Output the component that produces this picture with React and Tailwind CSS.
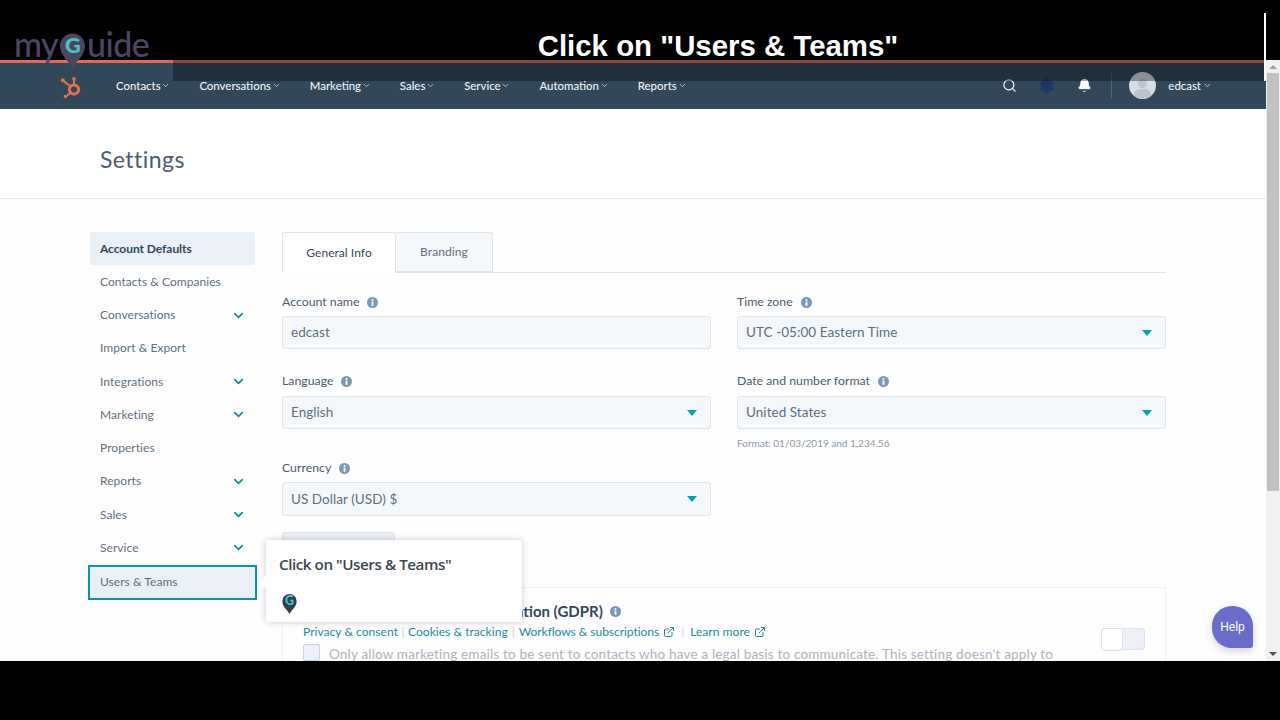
import { ChevronDown, Search, Settings, Bell, ExternalLink } from 'lucide-react';

const NAV = ['Contacts', 'Conversations', 'Marketing', 'Sales', 'Service', 'Automation', 'Reports'];

const SIDE = [
  ['Account Defaults', false],
  ['Contacts & Companies', false],
  ['Conversations', true],
  ['Import & Export', false],
  ['Integrations', true],
  ['Marketing', true],
  ['Properties', false],
  ['Reports', true],
  ['Sales', true],
  ['Service', true],
];

function Info({ className = '' }) {
  return (
    <svg viewBox="0 0 12 12" className={`w-[11px] h-[11px] ${className}`}>
      <circle cx="6" cy="6" r="6" fill="#7c98b6" />
      <circle cx="6" cy="3.2" r="1.1" fill="#fff" />
      <rect x="5" y="5" width="2" height="4.6" fill="#fff" />
    </svg>
  );
}

function Caret() {
  return <span className="w-0 h-0 border-x-[5.5px] border-x-transparent border-t-[6px] border-t-[#0a9fb5]" />;
}

function Field({ label, value, select, labelGap = 'mb-[6px]', box = 'h-[33px]' }) {
  return (
    <div>
      <div className={`flex items-center gap-[8px] h-[16px] text-[12.3px] text-[#4a5c6e] ${labelGap}`}>
        {label}
        <Info />
      </div>
      <div className={`${box} flex items-center justify-between pl-[8px] pr-[13px] bg-[#f5f8fa] border border-[#dfe3eb] rounded-[3px] text-[13.5px] tracking-[0.05px] text-[#5d6f80]`}>
        {value}
        {select && <Caret />}
      </div>
    </div>
  );
}

function Sprocket() {
  return (
    <svg viewBox="0 0 22 22" className="w-[22px] h-[22px]">
      <circle cx="14" cy="13.5" r="4.6" fill="none" stroke="#e8704f" strokeWidth="3" />
      <path d="M14 8V3.5M10.5 10.5L3.5 5M10.8 16.8L6 20.5" stroke="#e8704f" strokeWidth="2" fill="none" />
      <circle cx="14" cy="2.8" r="1.9" fill="#e8704f" />
      <circle cx="2.8" cy="4.2" r="2" fill="#e8704f" />
      <circle cx="5.4" cy="20.4" r="1.7" fill="#e8704f" />
    </svg>
  );
}

function Pin({ className = '', large }) {
  return (
    <svg viewBox="0 0 30 42" className={className}>
      <path d="M15 42C12 34 0 27 0 15a15 15 0 0 1 30 0c0 12-12 19-15 27z" fill={large ? '#4b4663' : '#2c3e50'} />
      <text x="15" y="23.5" textAnchor="middle" fontSize="26" fontWeight="900" fill="#45c8c4" fontFamily="Lato, sans-serif">G</text>
    </svg>
  );
}

export default function App() {
  return (
    <div className="relative w-[1280px] h-[720px] bg-black overflow-hidden flex flex-col font-['Lato',sans-serif]">
      {/* ── Video caption bar ── */}
      <div className="h-[60px] shrink-0 flex items-center justify-center pl-[156px] pt-[32px] box-border">
        <span className="text-[29.4px] leading-none font-bold text-white font-['Liberation_Sans',sans-serif] whitespace-nowrap">Click on "Users &amp; Teams"</span>
      </div>

      <div className="h-[601px] shrink-0 flex">
        <div className="w-[1266px] shrink-0 flex flex-col bg-white overflow-hidden">
          {/* ── Nav ── */}
          <div className="h-[49px] shrink-0 bg-[#33475b] border-t-[3px] border-[#df6b50] flex items-center pb-[1px] text-white">
            <div className="w-[116px] shrink-0 pl-[60px] pt-[2px]"><Sprocket /></div>
            <div className="flex items-center gap-[29px] text-[11.4px] font-medium text-[#eef2f6]">
              {NAV.map(n => (
                <span key={n} className="flex items-center gap-[0.8px]">
                  {n}
                  <ChevronDown className="w-[9px] h-[9px]" strokeWidth={1.8} />
                </span>
              ))}
            </div>
            <div className="ml-auto flex items-center pr-[54px]">
              <Search className="w-[15px] h-[15px] text-white" strokeWidth={1.8} />
              <Settings className="w-[16px] h-[16px] ml-[22px] text-[#1c3a63]" fill="#1c3a63" strokeWidth={2.4} />
              <Bell className="w-[15px] h-[15px] ml-[22px] text-white" fill="#fff" strokeWidth={1.5} />
              <div className="w-px h-[25px] bg-[#51657a] ml-[19px]" />
              <div className="relative w-[27px] h-[27px] ml-[17px] rounded-full bg-[#d6dde6] overflow-hidden">
                <div className="absolute left-[9px] top-[7px] w-[9px] h-[9px] rounded-full bg-[#bcc4ce]" />
                <div className="absolute left-[5px] top-[17px] w-[17px] h-[12px] rounded-full bg-[#bcc4ce]" />
              </div>
              <span className="ml-[12px] text-[11.4px] font-medium text-[#eef2f6]">edcast</span>
              <ChevronDown className="w-[9px] h-[9px] ml-[2px]" strokeWidth={1.8} />
            </div>
          </div>

          {/* ── Page header ── */}
          <div className="h-[90px] shrink-0 border-b border-[#e3e5e8] flex items-center pl-[100px] pt-[12px]">
            <h1 className="text-[23px] font-normal tracking-[0.45px] text-[#4a5c6e]">Settings</h1>
          </div>

          {/* ── Body ── */}
          <div className="flex-1 flex pl-[90px] pt-[33px] bg-[#fefefe]">
            <div className="w-[165px] shrink-0">
              {SIDE.map(([name, more], i) => (
                <div
                  key={name}
                  className={`h-[33.25px] flex items-center justify-between pl-[10px] pr-[9px] text-[12px] ${i === 0 ? 'bg-[#eaf0f6] rounded-[2px] font-bold text-[#33475b] tracking-[-0.05px]' : 'text-[#5d6f80] tracking-[0.05px]'}`}
                >
                  {name}
                  {more && <ChevronDown className="w-[15px] h-[15px] text-[#0a8aa3]" strokeWidth={2.6} />}
                </div>
              ))}
              <div className="h-[35px] -mx-[2px] flex items-center pl-[10px] bg-[#eaf0f6] border-2 border-[#0a93ae] text-[12px] tracking-[0.05px] text-[#5d6f80]">
                Users &amp; Teams
              </div>
            </div>

            <div className="w-[884px] ml-[27px] shrink-0">
              {/* Tabs */}
              <div className="flex h-[41px] border-b border-[#dfe3eb]">
                <div className="w-[114px] h-[41px] flex items-center justify-center border border-b-0 border-[#dfe3eb] rounded-t-[3px] bg-white text-[12px] tracking-[0.05px] text-[#33475b]">General Info</div>
                <div className="w-[97px] h-[40px] flex items-center justify-center border border-l-0 border-[#dfe3eb] rounded-tr-[3px] bg-[#f5f8fa] text-[12px] tracking-[0.1px] text-[#5d6f80]">Branding</div>
              </div>

              {/* Form */}
              <div className="grid grid-cols-[429px_429px] gap-x-[26px] mt-[21px]">
                <Field label="Account name" value="edcast" />
                <Field label="Time zone" value="UTC -05:00 Eastern Time" select />
                <div className="mt-[24px]"><Field label="Language" value="English" select labelGap="mb-[7px]" /></div>
                <div className="mt-[24px]">
                  <Field label="Date and number format" value="United States" select labelGap="mb-[7px]" />
                  <p className="mt-[7px] text-[10px] text-[#8d9bab]">Format: 01/03/2019 and 1,234.56</p>
                </div>
                <div className="mt-[9px]"><Field label="Currency" value="US Dollar (USD) $" select box="h-[34px]" /></div>
              </div>

              <div className="w-[113px] h-[30px] mt-[16px] bg-[#eaf0f6] border border-[#dfe3eb] rounded-[3px]" />

              {/* GDPR card */}
              <div className="relative mt-[25px] h-[200px] border border-[#eef1f5] pl-[20px] pt-[14px]">
                <div className="flex items-center gap-[7px] ml-[10px] text-[15px] font-bold text-[#33475b] h-[18px] whitespace-nowrap">
                  General Data Protection Regulation (GDPR)
                  <Info />
                </div>
                <div className="flex items-center mt-[3px] text-[12.1px] text-[#1f8a9e] h-[18px] whitespace-nowrap">
                  Privacy &amp; consent
                  <span className="mx-[3.5px] text-[#cbd6e2]">|</span>
                  Cookies &amp; tracking
                  <span className="mx-[4px] text-[#cbd6e2]">|</span>
                  <span className="tracking-[-0.08px]">Workflows &amp; subscriptions</span>
                  <ExternalLink className="w-[12px] h-[12px] ml-[4px]" />
                  <span className="mx-[6px] text-[#cbd6e2]">|</span>
                  Learn more
                  <ExternalLink className="w-[12px] h-[12px] ml-[4px]" />
                </div>
                <div className="flex items-start mt-[3px]">
                  <span className="w-[17px] h-[17px] shrink-0 bg-[#eaf0f6] border border-[#cbd6e2] rounded-[2px]" />
                  <span className="ml-[9px] text-[13.5px] tracking-[0.18px] text-[#a9b4c0] whitespace-nowrap">Only allow marketing emails to be sent to contacts who have a legal basis to communicate. This setting doesn't apply to</span>
                </div>
                {/* Toggle */}
                <div className="absolute right-[20px] top-[40px] w-[44px] h-[22px] bg-[#eaf0f6] border border-[#dfe3eb] rounded-[3px]">
                  <div className="w-[22px] h-[23px] -mt-px -ml-px bg-white border border-[#dfe3eb] rounded-[4px]" />
                </div>
              </div>
            </div>
          </div>
        </div>

        {/* ── Scrollbar ── */}
        <div className="w-[14px] shrink-0 bg-[#f1f1f1] flex flex-col items-center">
          <span className="mt-[5px] w-0 h-0 border-x-[4px] border-x-transparent border-b-[4px] border-b-[#a3a3a3]" />
          <div className="w-[12px] h-[418px] mt-[4px] bg-[#c1c1c1]" />
          <span className="mt-auto mb-[5px] w-0 h-0 border-x-[4px] border-x-transparent border-t-[4px] border-t-[#505050]" />
        </div>
      </div>

      <div className="flex-1" />

      {/* ── Video overlays ── */}
      <div className="absolute left-[173px] top-[60px] w-[1093px] h-[21px] bg-black/35" />
      <div className="absolute left-[1264px] top-[13px] w-[2px] h-[68px] bg-white" />

      <div className="absolute left-[14px] top-[26px] flex items-start text-[34px] leading-[36px] font-medium text-[#4b4663] tracking-[-0.6px]">
        <span>my</span>
        <Pin large className="w-[25px] h-[42px] mt-[4px] mx-[2px]" />
        <span>uide</span>
      </div>

      {/* Tooltip */}
      <div className="absolute left-[266px] top-[540px] w-[256px] h-[82px] bg-white rounded-[2px] shadow-[0_0_6px_rgba(0,0,0,0.22)] pl-[13px] pt-[13px]">
        <p className="text-[15.2px] leading-[22px] font-semibold text-[#3c4650] font-['Open_Sans',sans-serif] tracking-[-0.45px]">Click on "Users &amp; Teams"</p>
        <Pin className="w-[15px] h-[20px] ml-[3px] mt-[19px]" />
        <span className="absolute -left-[5px] top-[37px] w-[10px] h-[10px] rotate-45 bg-white" />
      </div>

      {/* Help */}
      <div className="absolute left-[1212px] top-[606px] w-[41px] h-[42px] flex items-center justify-center bg-[#6a6cc9] rounded-t-[20px] rounded-bl-[20px] rounded-br-[3px] shadow-[0_3px_8px_rgba(0,0,0,0.18)] text-[12px] text-white font-['Roboto',sans-serif]">
        Help
      </div>
    </div>
  );
}
